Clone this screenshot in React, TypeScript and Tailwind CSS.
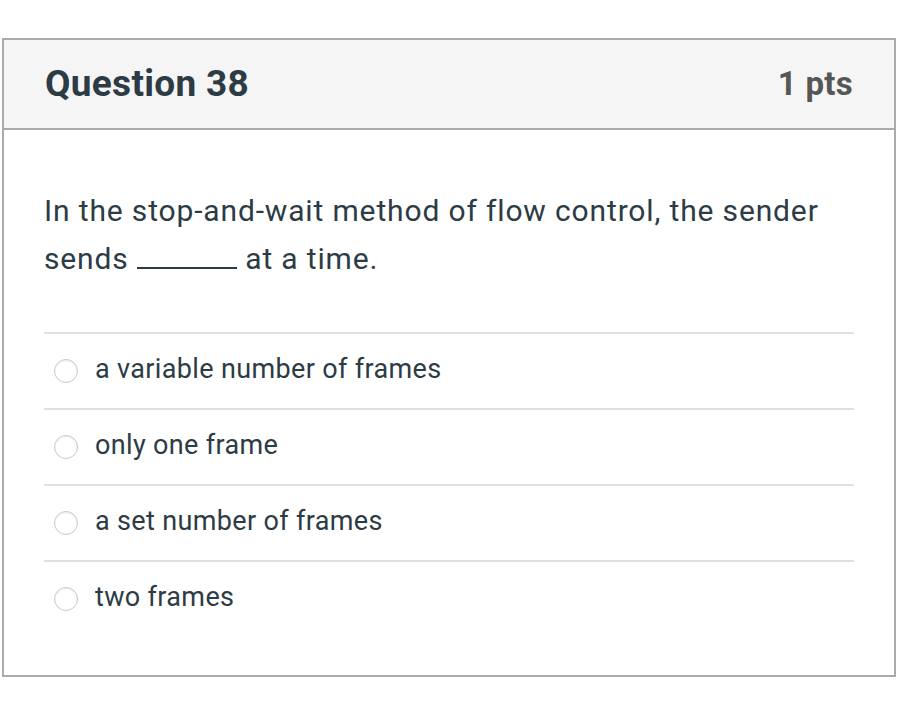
import React from 'react';

const options = [
  'a variable number of frames',
  'only one frame',
  'a set number of frames',
  'two frames',
];

const App: React.FC = () => {
  return (
    <div className="min-h-[704px] w-[921px] bg-white pt-[38px] pl-[2px] font-['Roboto',sans-serif] text-[#2d3b45]">
      <div className="w-[894px] border-2 border-[#aaaaaa]">
        <div className="flex h-[90px] items-center justify-between border-b-2 border-[#aaaaaa] bg-[#f5f5f5] pl-[41px] pr-[41px]">
          <h2 className="text-[37px] font-bold tracking-[0.3px]">Question 38</h2>
          <span className="text-[33px] font-bold tracking-[0.3px] text-[#565656]">1 pts</span>
        </div>
        <div className="px-[40px] pt-[57px] pb-[39px]">
          <p className="text-[30px] leading-[48px] tracking-[0.85px]">
            In the stop-and-wait method of flow control, the sender sends{' '}
            <span className="inline-block h-[1px] w-[100px] border-b-2 border-[#2d3b45] align-baseline"></span>{' '}
            at a time.
          </p>
          <div className="mt-[49px]">
            {options.map(opt => (
              <div key={opt} className="flex h-[76px] items-center border-t-2 border-[#e0e0e0]">
                <span className="ml-[10px] mr-[17px] h-[24px] w-[24px] shrink-0 rounded-full border border-[#c8c8c8] bg-white shadow-[inset_0_1px_2px_rgba(0,0,0,0.08)]"></span>
                <span className="-mt-[3px] text-[27px] tracking-[0.35px]">{opt}</span>
              </div>
            ))}
          </div>
        </div>
      </div>
    </div>
  );
};

export default App;
